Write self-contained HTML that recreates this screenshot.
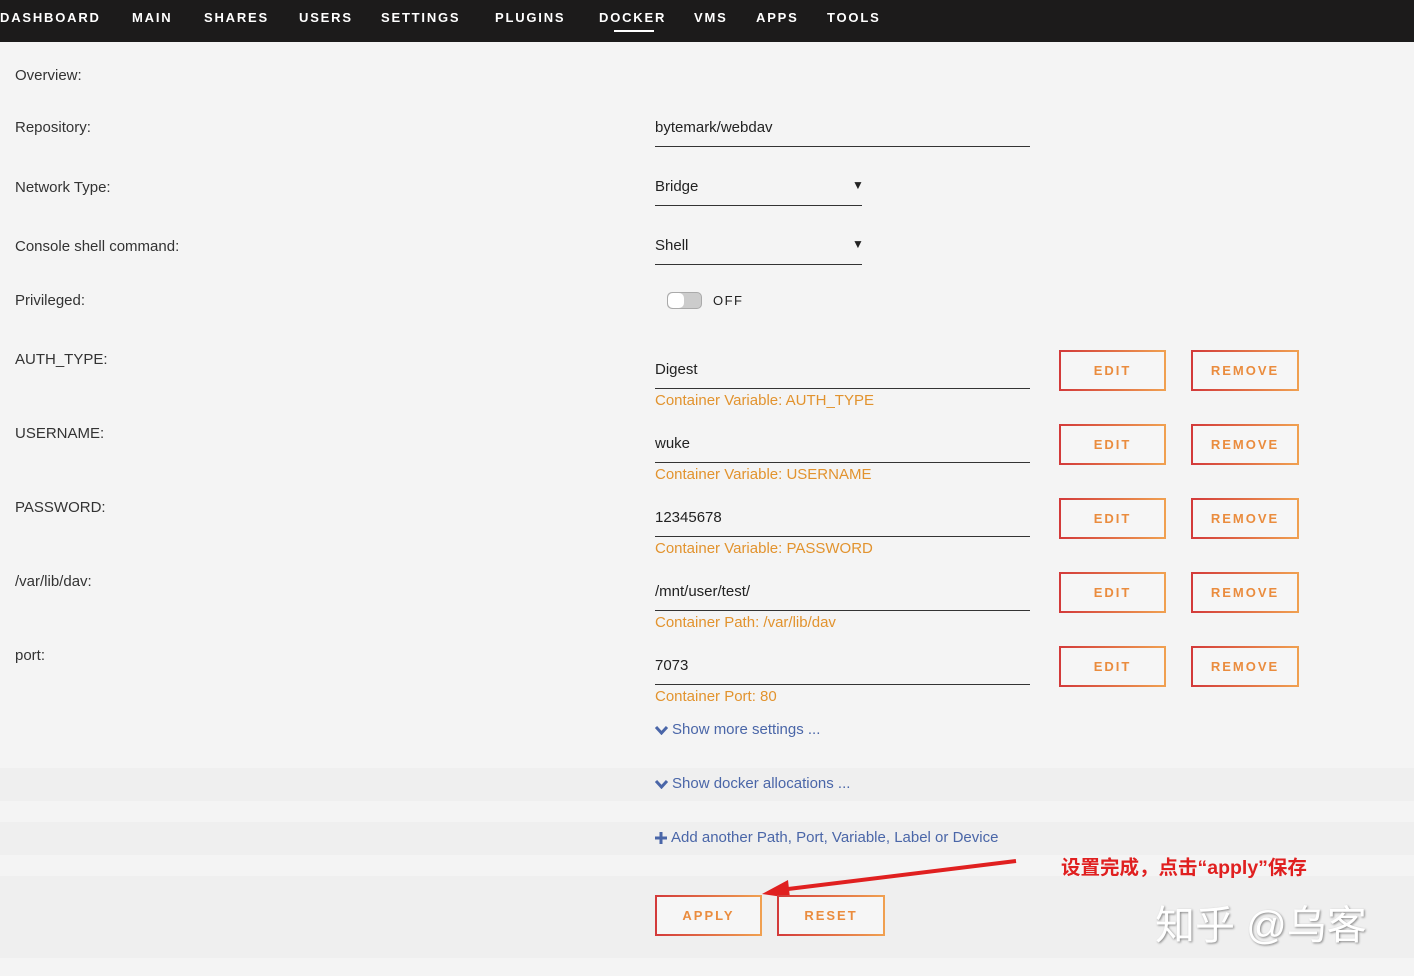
<!DOCTYPE html>
<html><head><meta charset="utf-8"><style>
*{margin:0;padding:0;box-sizing:border-box}
body{width:1414px;height:976px;background:#f4f4f4;font-family:"Liberation Sans",sans-serif;color:#222;position:relative;overflow:hidden}
.nav{position:absolute;left:0;top:0;width:1414px;height:42px;background:#1c1b1b}
.nav span{position:absolute;top:10px;color:#fff;font-weight:bold;font-size:13px;letter-spacing:1.8px}
.ul{position:absolute;left:614px;top:30px;width:40px;height:2px;background:#fff}
.band{position:absolute;left:0;width:1414px;background:#efefef}
.t{position:absolute;font-size:15px;white-space:nowrap}
.lbl{left:15px;color:#333}
.val{left:655px;color:#222}
.line{position:absolute;left:655px;height:1px;background:#333}
.hint{position:absolute;left:655px;font-size:15px;color:#e2932e;white-space:nowrap}
.btn{position:absolute;height:41px;border:2px solid;border-image:linear-gradient(90deg,#d33a3a,#f0a050) 1;color:#ea8c3e;font-weight:bold;font-size:13px;letter-spacing:2px;text-align:center;line-height:37px;background:#f6f6f6}
.link{position:absolute;left:655px;font-size:15px;color:#4a66a8;white-space:nowrap}
.link svg{vertical-align:middle;margin-right:4px}
</style></head><body>
<div class="nav">
<span style="left:0">DASHBOARD</span><span style="left:132px">MAIN</span><span style="left:204px">SHARES</span><span style="left:299px">USERS</span><span style="left:381px">SETTINGS</span><span style="left:495px">PLUGINS</span><span style="left:599px">DOCKER</span><span style="left:694px">VMS</span><span style="left:756px">APPS</span><span style="left:827px">TOOLS</span>
<div class="ul"></div></div>
<div class="band" style="top:768px;height:33px"></div>
<div class="band" style="top:822px;height:33px"></div>
<div class="band" style="top:876px;height:82px"></div>

<div class="t lbl" style="top:67px">Overview:</div>
<div class="t lbl" style="top:119px">Repository:</div>
<div class="t val" style="top:119px">bytemark/webdav</div><div class="line" style="top:146px;width:375px"></div>
<div class="t lbl" style="top:179px">Network Type:</div>
<div class="t val" style="top:178px">Bridge</div><div class="t" style="left:852px;top:178px;font-size:12px">▼</div><div class="line" style="top:205px;width:207px"></div>
<div class="t lbl" style="top:238px">Console shell command:</div>
<div class="t val" style="top:237px">Shell</div><div class="t" style="left:852px;top:237px;font-size:12px">▼</div><div class="line" style="top:264px;width:207px"></div>
<div class="t lbl" style="top:292px">Privileged:</div>
<div style="position:absolute;left:667px;top:292px;width:35px;height:17px;border-radius:5px;background:#ccc;border:1px solid #aaa"><div style="width:16px;height:15px;background:#fff;border-radius:5px"></div></div>
<div class="t" style="left:713px;top:293px;font-size:13px;letter-spacing:1.5px">OFF</div>

<div class="t lbl" style="top:351px">AUTH_TYPE:</div>
<div class="t val" style="top:361px">Digest</div><div class="line" style="top:388px;width:375px"></div>
<div class="hint" style="top:392px">Container Variable: AUTH_TYPE</div>
<div class="btn" style="left:1059px;top:350px;width:107px">EDIT</div><div class="btn" style="left:1191px;top:350px;width:108px">REMOVE</div>

<div class="t lbl" style="top:425px">USERNAME:</div>
<div class="t val" style="top:435px">wuke</div><div class="line" style="top:462px;width:375px"></div>
<div class="hint" style="top:466px">Container Variable: USERNAME</div>
<div class="btn" style="left:1059px;top:424px;width:107px">EDIT</div><div class="btn" style="left:1191px;top:424px;width:108px">REMOVE</div>

<div class="t lbl" style="top:499px">PASSWORD:</div>
<div class="t val" style="top:509px">12345678</div><div class="line" style="top:536px;width:375px"></div>
<div class="hint" style="top:540px">Container Variable: PASSWORD</div>
<div class="btn" style="left:1059px;top:498px;width:107px">EDIT</div><div class="btn" style="left:1191px;top:498px;width:108px">REMOVE</div>

<div class="t lbl" style="top:573px">/var/lib/dav:</div>
<div class="t val" style="top:583px">/mnt/user/test/</div><div class="line" style="top:610px;width:375px"></div>
<div class="hint" style="top:614px">Container Path: /var/lib/dav</div>
<div class="btn" style="left:1059px;top:572px;width:107px">EDIT</div><div class="btn" style="left:1191px;top:572px;width:108px">REMOVE</div>

<div class="t lbl" style="top:647px">port:</div>
<div class="t val" style="top:657px">7073</div><div class="line" style="top:684px;width:375px"></div>
<div class="hint" style="top:688px">Container Port: 80</div>
<div class="btn" style="left:1059px;top:646px;width:107px">EDIT</div><div class="btn" style="left:1191px;top:646px;width:108px">REMOVE</div>

<div class="link" style="top:721px"><svg width="13" height="10"><path d="M1 2 L6.5 8 L12 2" stroke="#4a66a8" stroke-width="3" fill="none"/></svg>Show more settings ...</div>
<div class="link" style="top:775px"><svg width="13" height="10"><path d="M1 2 L6.5 8 L12 2" stroke="#4a66a8" stroke-width="3" fill="none"/></svg>Show docker allocations ...</div>
<div class="link" style="top:829px"><svg width="12" height="12"><path d="M6 0V12M0 6H12" stroke="#4a66a8" stroke-width="3"/></svg>Add another Path, Port, Variable, Label or Device</div>

<div class="t" style="left:1061px;top:851px;font-size:19.5px;font-weight:bold;color:#e02020;font-family:'Liberation Sans','Noto Sans CJK SC',sans-serif">设置完成，点击“apply”保存</div>
<svg style="position:absolute;left:760px;top:858px" width="260" height="42"><line x1="256" y1="3" x2="20" y2="32" stroke="#e02020" stroke-width="4"/><polygon points="2,36 28,22 30,40" fill="#e02020"/></svg>
<div class="btn" style="left:655px;top:895px;width:107px">APPLY</div>
<div class="btn" style="left:777px;top:895px;width:108px">RESET</div>
<div class="t" style="left:1155px;top:893px;font-size:40px;color:#fff;text-shadow:1px 1px 2px #888;font-family:'Liberation Sans','Noto Sans CJK SC',sans-serif">知乎 @乌客</div>
</body></html>
